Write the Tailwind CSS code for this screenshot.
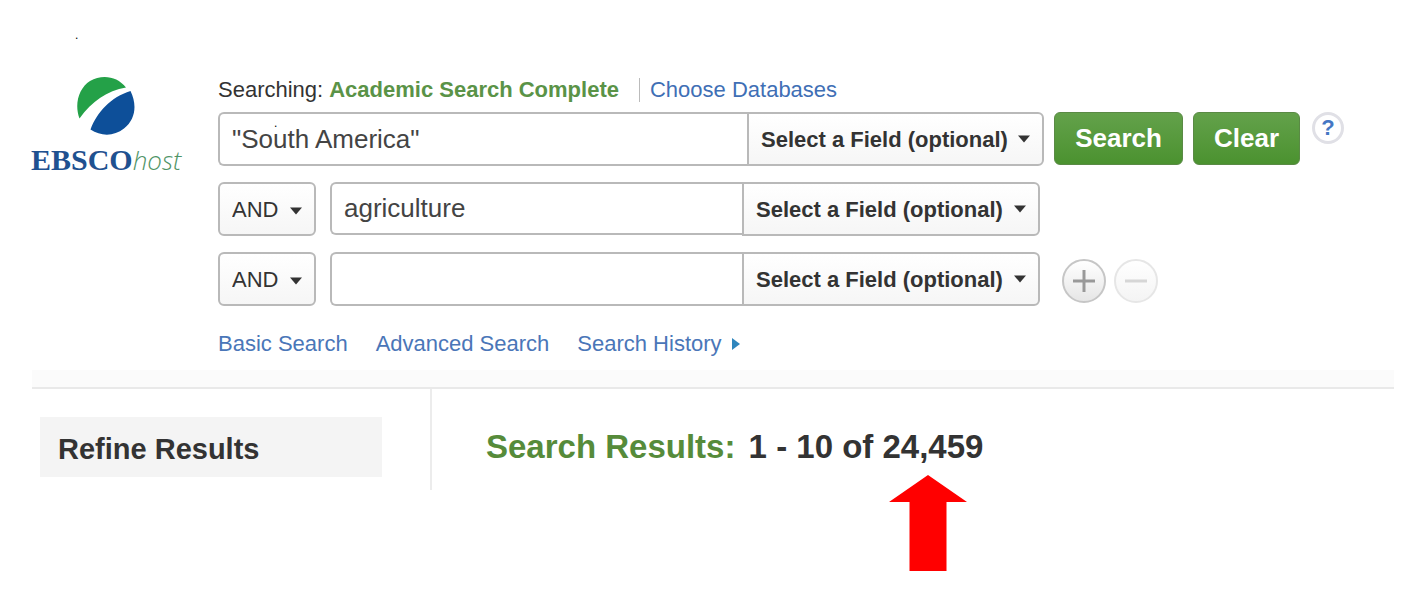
<!DOCTYPE html>
<html lang="en">
<head>
    <meta charset="UTF-8">
    <meta name="viewport" content="width=device-width, initial-scale=1.0">
    <title>Search Results: EBSCOhost</title>
    <script src="https://cdn.jsdelivr.net/npm/@tailwindcss/browser@4"></script>
</head>
<body class="min-h-screen bg-white font-['Liberation_Sans',Arial,sans-serif] text-[#333]">
    <span class="absolute left-[75px] top-[29px] text-xs leading-3 text-black">.</span>
    <div class="px-8 pt-[76px] pb-7">
        <header class="flex items-start gap-9 pb-3">
            <a href="#" class="w-[150px] shrink-0 whitespace-nowrap" aria-label="EBSCOhost">
                <svg class="ml-11 block h-[60px] w-[60px]" viewBox="0 0 60 60" aria-hidden="true">
                    <path fill="#24a148" d="M3.500 42.500C-2 28 3 12 14 5C26 -2 41 0 50 11.500C31 15 16 25 3.500 42.500Z"/>
                    <path fill="#0d4f99" d="M54.500 15C61 28 60 43 48 52.500C38 60.500 25 60.500 14.500 53.500C21 36 35 21 54.500 15Z"/>
                </svg>
                <span class="-ml-px mt-2 flex items-baseline leading-8">
                    <span class="font-['Liberation_Serif',serif] text-[30px] font-bold text-[#1f5190]">EBSCO</span>
                    <span class="font-['Open_Sans',sans-serif] text-[26px] font-light italic text-[#4f9466]">host</span>
                </span>
            </a>

            <form class="min-w-0 flex-1" action="#" method="get">
                <div class="mb-2 flex items-center text-[22px] leading-7">
                    <span class="mr-[6px]">Searching:</span>
                    <strong class="text-[#5a9347]">Academic Search Complete</strong>
                    <a href="#" class="ml-5 border-l border-[#bbb] pl-[10px] leading-6 text-[#3f6fb5]">Choose Databases</a>
                </div>

                <div class="flex items-start gap-[10px]">
                    <div class="relative flex h-[54px] max-w-[826px] flex-1">
                        <input type="text" aria-label="First search term" value="&quot;South America&quot;" class="min-w-0 flex-1 rounded-l-md border-2 border-r-0 border-[#b9b9b9] pl-3 text-[26px] text-[#444] outline-none">
                        <select aria-label="First field" class="w-[297px] shrink-0 appearance-none rounded-r-md border-2 border-[#b9b9b9] bg-linear-to-b from-white to-[#f6f6f6] pl-3 text-[22px] font-bold">
                            <option>Select a Field (optional)</option>
                        </select>
                        <svg class="pointer-events-none absolute right-[14px] top-[23px] h-2 w-3" viewBox="0 0 12 8" aria-hidden="true"><path fill="#333" d="M0 0.500H12L6 7.500Z"/></svg>
                        <span class="absolute left-14 top-[5px] text-xs leading-3 text-black">.</span>
                    </div>
                    <button type="submit" class="h-[53px] w-[129px] rounded-md border border-[#5a8a45] bg-linear-to-b from-[#63a14a] to-[#4b922f] text-[26px] font-bold text-white">Search</button>
                    <button type="reset" class="h-[53px] w-[107px] rounded-md border border-[#5a8a45] bg-linear-to-b from-[#63a14a] to-[#4b922f] text-[26px] font-bold text-white">Clear</button>
                    <a href="#" class="ml-[2px] flex h-8 w-8 items-center justify-center rounded-full border-[3px] border-[#e0e0e6] text-[22px] font-bold leading-none text-[#4477c4]" aria-label="Help">?</a>
                </div>

                <div class="mt-4 flex gap-[14px]">
                    <div class="relative h-[54px]">
                        <select aria-label="Second operator" class="h-full w-[98px] appearance-none rounded-md border-2 border-[#b9b9b9] bg-linear-to-b from-white to-[#f6f6f6] pl-3 text-[22px]">
                            <option>AND</option>
                            <option>OR</option>
                            <option>NOT</option>
                        </select>
                        <svg class="pointer-events-none absolute right-[14px] top-[25px] h-2 w-3" viewBox="0 0 12 8" aria-hidden="true"><path fill="#333" d="M0 0.500H12L6 7.500Z"/></svg>
                    </div>
                    <div class="relative flex h-[54px] max-w-[710px] flex-1 items-start">
                        <input type="text" aria-label="Second search term" value="agriculture" class="h-[53px] min-w-0 flex-1 rounded-l-md border-2 border-r-0 border-[#b9b9b9] pl-3 text-[26px] text-[#444] outline-none">
                        <select aria-label="Second field" class="h-full w-[298px] shrink-0 appearance-none rounded-r-md border-2 border-[#b9b9b9] bg-linear-to-b from-white to-[#f6f6f6] pl-3 text-[22px] font-bold">
                            <option>Select a Field (optional)</option>
                        </select>
                        <svg class="pointer-events-none absolute right-[14px] top-[23px] h-2 w-3" viewBox="0 0 12 8" aria-hidden="true"><path fill="#333" d="M0 0.500H12L6 7.500Z"/></svg>
                    </div>
                </div>

                <div class="mt-4 flex gap-[14px]">
                    <div class="relative h-[54px]">
                        <select aria-label="Third operator" class="h-full w-[98px] appearance-none rounded-md border-2 border-[#b9b9b9] bg-linear-to-b from-white to-[#f6f6f6] pl-3 text-[22px]">
                            <option>AND</option>
                            <option>OR</option>
                            <option>NOT</option>
                        </select>
                        <svg class="pointer-events-none absolute right-[14px] top-[25px] h-2 w-3" viewBox="0 0 12 8" aria-hidden="true"><path fill="#333" d="M0 0.500H12L6 7.500Z"/></svg>
                    </div>
                    <div class="relative flex h-[54px] max-w-[710px] flex-1">
                        <input type="text" aria-label="Third search term" class="min-w-0 flex-1 rounded-l-md border-2 border-r-0 border-[#b9b9b9] pl-3 text-[26px] text-[#444] outline-none">
                        <select aria-label="Third field" class="w-[298px] shrink-0 appearance-none rounded-r-md border-2 border-[#b9b9b9] bg-linear-to-b from-white to-[#f6f6f6] pl-3 text-[22px] font-bold">
                            <option>Select a Field (optional)</option>
                        </select>
                        <svg class="pointer-events-none absolute right-[14px] top-[23px] h-2 w-3" viewBox="0 0 12 8" aria-hidden="true"><path fill="#333" d="M0 0.500H12L6 7.500Z"/></svg>
                    </div>
                    <div class="ml-2 flex items-center gap-2 pt-1">
                        <button type="button" aria-label="Add row" class="flex h-11 w-11 items-center justify-center rounded-full border-2 border-[#c6c6c6] bg-linear-to-b from-white to-[#e6e6e6]">
                            <svg class="h-6 w-6" viewBox="0 0 24 24" aria-hidden="true"><path stroke="#999" stroke-width="3" d="M1 12H23M12 1V23"/></svg>
                        </button>
                        <button type="button" aria-label="Remove row" class="flex h-11 w-11 items-center justify-center rounded-full border-2 border-[#e6e6e6] bg-linear-to-b from-white to-[#f4f4f4]">
                            <svg class="h-6 w-6" viewBox="0 0 24 24" aria-hidden="true"><path stroke="#d6d6d6" stroke-width="3" d="M1 12H23"/></svg>
                        </button>
                    </div>
                </div>

                <nav class="mt-6 flex gap-7 text-[22px] leading-7 text-[#4a76b8]">
                    <a href="#">Basic Search</a>
                    <a href="#">Advanced Search</a>
                    <a href="#" class="flex items-center gap-[10px]">Search History
                        <svg class="h-3 w-2" viewBox="0 0 8 12" aria-hidden="true"><path fill="#2f86bd" d="M0 0L8 6L0 12Z"/></svg>
                    </a>
                </nav>
            </form>
        </header>

        <div class="h-[19px] border-b-2 border-[#e9e9e9] bg-[#fbfbfb]"></div>

        <main class="flex items-start">
            <aside class="h-[101px] w-[400px] shrink-0 border-r-2 border-[#ececec] pl-2 pr-12 pt-7">
                <h2 class="bg-[#f4f4f4] pt-[14px] pb-[10px] pl-[18px] text-[29px] font-bold leading-9">Refine Results</h2>
            </aside>
            <section class="pl-[54px] pt-[38px]">
                <h1 class="text-[33px] font-bold leading-10"><span class="mr-1 text-[#568b3a]">Search Results:</span> 1 - 10 of 24,459</h1>
                <svg class="ml-auto mr-4 mt-2 h-24 w-[78px]" viewBox="0 0 78 96" aria-hidden="true"><path fill="#f00" d="M39 0L78 27H57.500V96H20.500V27H0Z"/></svg>
            </section>
        </main>
    </div>
</body>
</html>
